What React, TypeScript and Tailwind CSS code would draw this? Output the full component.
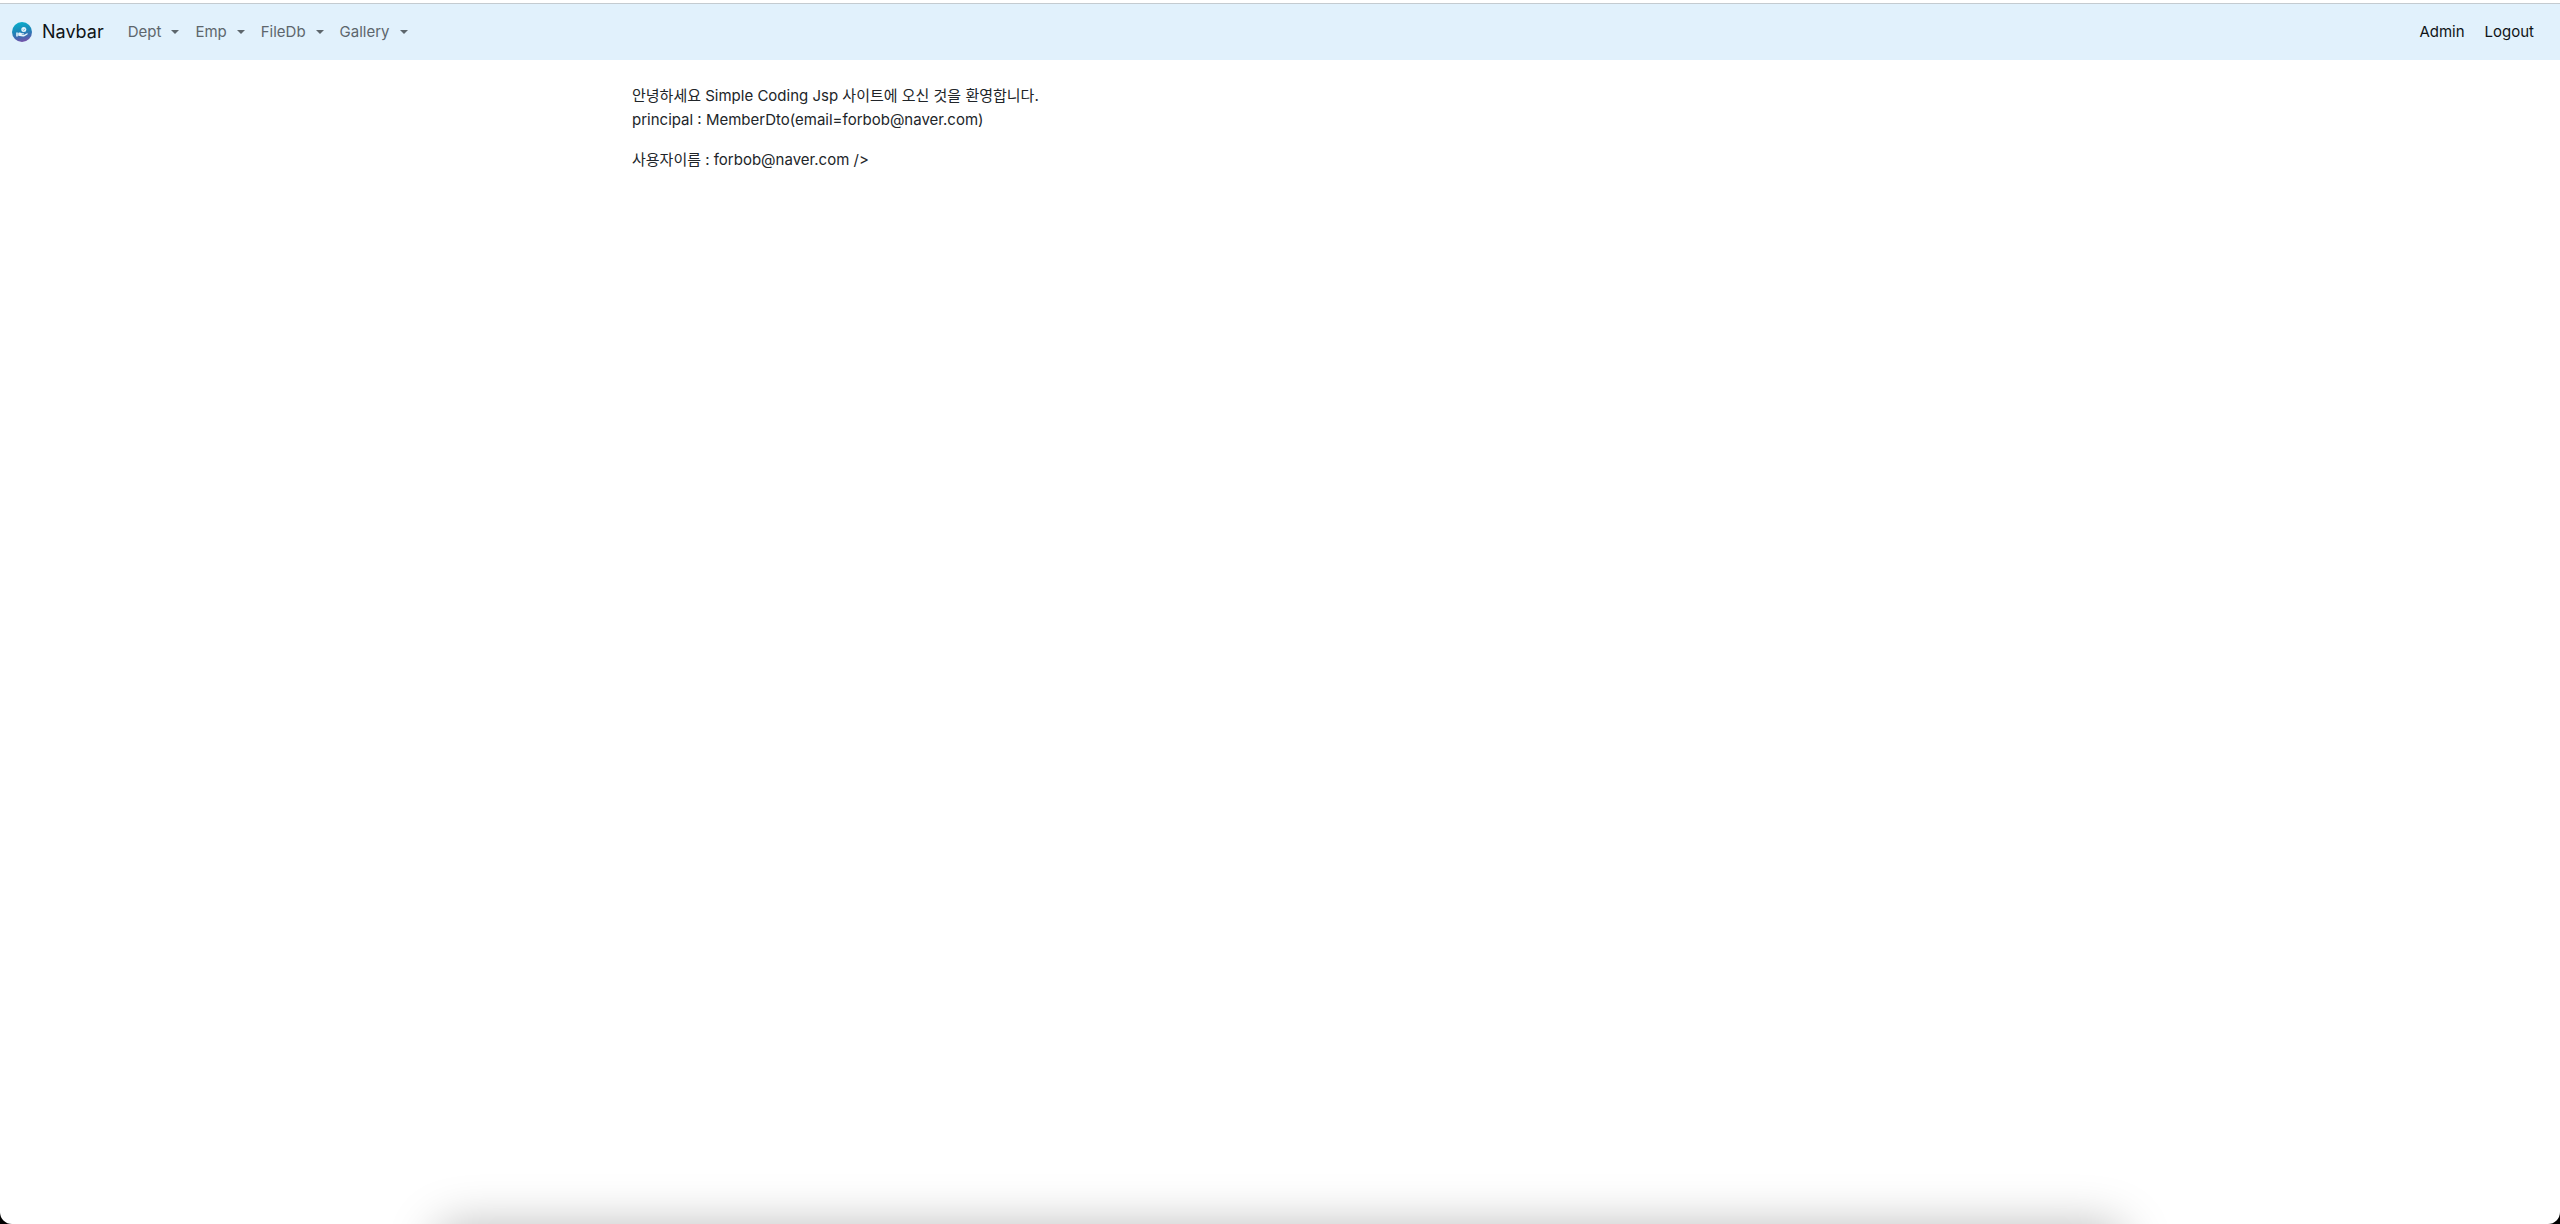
import { useState } from "react";

const FONT = "font-['Inter','Noto_Sans_CJK_KR',sans-serif]";

type Menu = { label: string; items: string[] };

const menus: Menu[] = [
  { label: "Dept", items: ["Dept"] },
  { label: "Emp", items: ["Emp"] },
  { label: "FileDb", items: ["FileDb"] },
  { label: "Gallery", items: ["Gallery"] },
];

function Logo() {
  return (
    <svg viewBox="0 0 20 20" className="size-5 shrink-0" aria-hidden="true">
      <defs>
        <linearGradient id="brand" x1="0.4" y1="0" x2="0.6" y2="1">
          <stop offset="0" stopColor="#0aaecb" />
          <stop offset="0.45" stopColor="#1c86b8" />
          <stop offset="0.75" stopColor="#4468b0" />
          <stop offset="1" stopColor="#7a4fa8" />
        </linearGradient>
      </defs>
      <circle cx="10" cy="10" r="10" fill="url(#brand)" />
      <circle cx="11.8" cy="7.5" r="2.5" fill="#e4f3fa" />
      <path d="M10.8 7.6l.8.8 1.3-1.6" fill="none" stroke="#2a8fc0" strokeWidth="0.6" />
      <path d="M4.2 10.6h1.6v3.8H4.2z" fill="#e4f3fa" />
      <path
        d="M6.2 10.9c1.4-.7 2.6-.4 3.6.3h1.6c.8 0 .8 1 0 1.1H9.8v.4h2.4l2.5-1.3c.8-.4 1.4.4.7 1l-2.9 1.9c-.5.3-1 .3-1.6.2L6.2 13.8z"
        fill="#e4f3fa"
      />
    </svg>
  );
}

function Caret() {
  return (
    <span
      aria-hidden="true"
      className="ml-2.5 border-x-4 border-t-4 border-x-transparent border-t-current"
    />
  );
}

export default function App() {
  const [open, setOpen] = useState<string | null>(null);
  return (
    <div className={`flex min-h-screen flex-col overflow-hidden bg-black text-[15px] leading-6 text-[#212529] ${FONT}`}>
      <div className="relative flex grow flex-col overflow-hidden rounded-b-xl bg-white pt-[3px]">
        <nav className="flex items-center border-t border-[#c4cbd0] bg-[#e1f1fc] px-3 py-2">
          <a href="#" className="mr-4 flex items-center gap-2.5 text-lg text-[#0f1417]">
            <Logo />
            Navbar
          </a>
          <ul className="flex">
            {menus.map((m) => (
              <li key={m.label} className="relative">
                <button
                  type="button"
                  aria-expanded={open === m.label}
                  onClick={() => setOpen(open === m.label ? null : m.label)}
                  className="flex items-center p-2 text-[#5d666c]"
                >
                  {m.label}
                  <Caret />
                </button>
                {open === m.label && (
                  <ul className="absolute left-0 top-full min-w-40 rounded-md border border-gray-300 bg-white py-2">
                    {m.items.map((i) => (
                      <li key={i}>
                        <a href="#" className="block px-4 py-1">{i}</a>
                      </li>
                    ))}
                  </ul>
                )}
              </li>
            ))}
          </ul>
          <ul className="ml-auto flex gap-1 pr-1.5">
            <li>
              <a href="#" className="block p-2 text-[#0f1417]">Admin</a>
            </li>
            <li>
              <a href="#" className="block p-2 text-[#0f1417]">Logout</a>
            </li>
          </ul>
        </nav>
        <main className="mx-auto mt-6 w-full max-w-[1320px] px-3">
          <p>안녕하세요 Simple Coding Jsp 사이트에 오신 것을 환영합니다.</p>
          <p>principal : MemberDto(email=forbob@naver.com)</p>
          <p className="mt-4">사용자이름 : forbob@naver.com /&gt;</p>
        </main>
        <div
          aria-hidden="true"
          className="absolute inset-x-[17%] top-full h-20 rounded-3xl shadow-[0_0_48px_rgba(0,0,0,0.26)]"
        />
      </div>
    </div>
  );
}
